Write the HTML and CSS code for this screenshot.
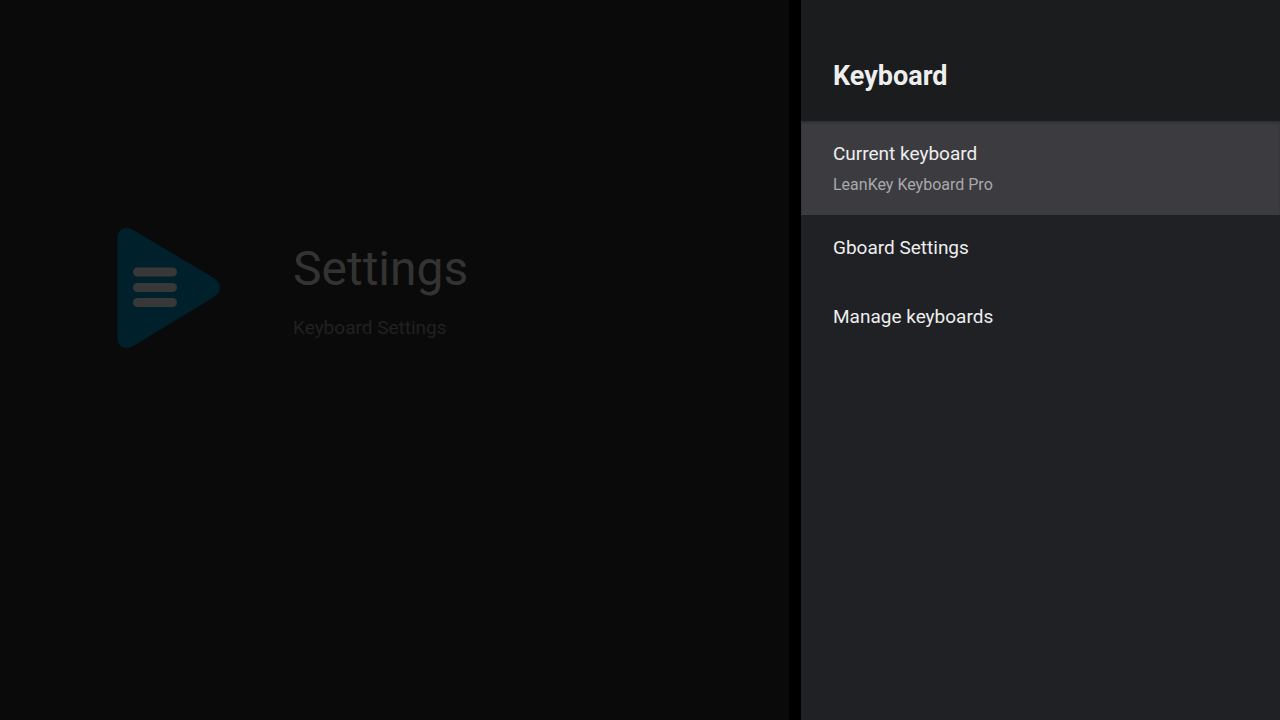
FILE: index.html
```
<!DOCTYPE html>
<html lang="en">
<head>
    <meta charset="UTF-8">
    <meta name="viewport" content="width=device-width, initial-scale=1.0">
    <title>Keyboard</title>
    <link rel="stylesheet" href="styles.css">
</head>
<body>

    <main class="guide">
        <svg class="guide-icon" viewBox="0 0 104 120" aria-hidden="true">
            <path fill="#00202b" d="M0.500 12C0.500 4 4 0 9 0C12 0 15 1 18 3L97 50C105 55 105 64 97 69L18 117C15 119 12 120 9 120C4 120 0.500 116 0.500 108Z"/>
            <g fill="#383838">
                <rect x="16" y="39.500" width="44" height="9" rx="4.500"/>
                <rect x="16" y="55" width="44" height="9" rx="4.500"/>
                <rect x="16" y="70" width="44" height="9" rx="4.500"/>
            </g>
        </svg>
        <div class="guide-text">
            <h1>Settings</h1>
            <p>Keyboard Settings</p>
        </div>
    </main>

    <aside class="panel">
        <header class="panel-header">
            <h2>Keyboard</h2>
        </header>
        <nav class="panel-list">
            <button class="item selected">
                <span class="item-title">Current keyboard</span>
                <span class="item-summary">LeanKey Keyboard Pro</span>
            </button>
            <button class="item">
                <span class="item-title">Gboard Settings</span>
            </button>
            <button class="item">
                <span class="item-title">Manage keyboards</span>
            </button>
        </nav>
    </aside>

</body>
</html>
```

FILE: styles.css
```
* {
    box-sizing: border-box;
}
body {
    display: flex;
    min-height: 100vh;
    margin: 0;
    background-color: #0a0a0a;
    color: #eee;
    font-family: Roboto, sans-serif;
}
h1, h2, p {
    margin: 0;
}
.guide {
    display: flex;
    flex: 1;
    align-items: flex-start;
    gap: 72px;
    padding: 228px 48px 48px 117px;
    border-right: 12px solid #000;
}
.guide-icon {
    flex: none;
    width: 104px;
    height: 120px;
}
.guide-text {
    padding-top: 13px;
}
.guide h1 {
    color: #333;
    font-size: 48px;
    font-weight: 400;
    line-height: 56px;
}
.guide p {
    margin-top: 19px;
    color: #212121;
    font-size: 19px;
    line-height: 24px;
}
.panel {
    width: 479px;
    background-color: #202124;
}
.panel-header {
    padding: 60px 32px 29px;
    background-color: #1b1c1e;
}
.panel-header h2 {
    font-size: 27px;
    font-weight: 700;
    line-height: 32px;
}
.item {
    display: flex;
    flex-direction: column;
    gap: 9px;
    width: 100%;
    padding: 21px 32px 24px;
    border: none;
    background: none;
    color: #eee;
    font-family: inherit;
    text-align: left;
    cursor: pointer;
}
.item-title {
    font-size: 19px;
    line-height: 24px;
}
.item-summary {
    color: #a9a9ab;
    font-size: 16px;
    line-height: 20px;
}
.selected {
    padding: 21px 32px 20px;
    background-color: #3c3c40;
    box-shadow: inset 0 2px 2px #303034;
}
```
